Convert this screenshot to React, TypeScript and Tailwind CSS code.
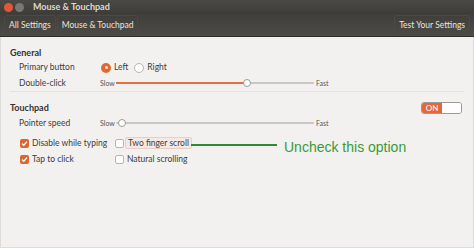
import React from "react";

const font = { fontFamily: 'Lato, "Open Sans", sans-serif' };

function Slider({ value, fill }: { value: number; fill: boolean }) {
  return (
    <div className="flex items-center">
      <span className="text-[7px] text-[#555] mr-[2px] w-[14px]">Slow</span>
      <div className="relative w-[198px] h-[8px] flex items-center">
        <div className="w-full h-[2px] bg-[#c9c7c3] rounded" />
        {fill && (
          <div className="absolute left-0 h-[2px] bg-[#e0723e]" style={{ width: `${value}px` }} />
        )}
        <div
          className="absolute w-[8px] h-[8px] rounded-full bg-white border border-[#9d9a94]"
          style={{ left: `${value - 4}px` }}
        />
      </div>
      <span className="text-[7px] text-[#555] ml-[2px]">Fast</span>
    </div>
  );
}

function Check({ on }: { on: boolean }) {
  return on ? (
    <div className="w-[9px] h-[9px] rounded-[2px] bg-[#d9682f] flex items-center justify-center shrink-0">
      <svg width="7" height="7" viewBox="0 0 7 7">
        <path d="M1 3.6 L2.8 5.3 L6 1.6" stroke="white" strokeWidth="1.3" fill="none" />
      </svg>
    </div>
  ) : (
    <div className="w-[9px] h-[9px] rounded-[2px] bg-white border border-[#b8b5b0] shrink-0" />
  );
}

export default function App() {
  return (
    <div className="w-[474px] h-[248px] flex flex-col text-[#3c3c3c] overflow-hidden whitespace-nowrap" style={font}>
      {/* title bar */}
      <div className="h-[14px] bg-gradient-to-b from-[#4a4944] to-[#3d3c38] flex items-center pl-[4px]">
        <div className="w-[9px] h-[9px] rounded-full bg-[#e2563b]" />
        <div className="w-[9px] h-[9px] rounded-full bg-[#7a7873] ml-[2px]" />
        <span className="ml-[9px] text-[9px] font-bold text-[#dcd9d2]">Mouse &amp; Touchpad</span>
      </div>
      {/* toolbar */}
      <div className="h-[23px] bg-gradient-to-b from-[#3f3e3a] to-[#4d4b46] flex items-center px-[4px] border-b border-[#2e2d2a]">
        <div className="px-[4px] py-[3px] rounded-[3px] border border-[#4b4944] text-[8.5px] text-[#e8e5df]">All Settings</div>
        <div className="ml-[1px] px-[4px] py-[3px] rounded-[3px] border border-[#4b4944] text-[8.5px] text-[#e8e5df]">Mouse &amp; Touchpad</div>
        <div className="ml-auto px-[4px] py-[3px] rounded-[3px] border border-[#4b4944] text-[8.5px] text-[#e8e5df]">Test Your Settings</div>
      </div>
      {/* content */}
      <div className="relative flex-1 bg-[#f2f1f0] border-x border-b border-[#dedcd8] px-[9px] pt-[9px]">
        <div className="h-[14px] flex items-center text-[9px] font-bold text-[#333]">General</div>
        <div className="h-[15px] flex items-center text-[8.5px]">
          <span className="ml-[9px] w-[82px]">Primary button</span>
          <div className="w-[10px] h-[10px] rounded-full bg-[#dd6a34] flex items-center justify-center">
            <div className="w-[3px] h-[3px] rounded-full bg-[#fbe2d5]" />
          </div>
          <span className="ml-[3px]">Left</span>
          <div className="ml-[6px] w-[10px] h-[10px] rounded-full bg-white border border-[#b8b5b0]" />
          <span className="ml-[3px]">Right</span>
        </div>
        <div className="h-[16px] flex items-center text-[8.5px]">
          <span className="ml-[9px] w-[81px]">Double-click</span>
          <Slider value={131} fill={true} />
        </div>
        <div className="h-px bg-[#e4e2df]" />
        <div className="h-[14px] mt-[9px] flex items-center text-[9px] font-bold text-[#333]">
          <span>Touchpad</span>
          <div className="ml-auto mr-[2px] w-[41px] h-[12px] rounded-[3px] border border-[#9d9a94] flex overflow-hidden">
            <div className="w-[20px] bg-[#e2673a] text-white text-[8px] font-normal flex items-center justify-center">ON</div>
            <div className="flex-1 bg-white" />
          </div>
        </div>
        <div className="h-[16px] flex items-center text-[8.5px]">
          <span className="ml-[9px] w-[81px]">Pointer speed</span>
          <Slider value={6} fill={false} />
        </div>
        <div className="h-[16px] mt-[4px] flex items-center text-[8.5px]">
          <div className="ml-[10px]"><Check on={true} /></div>
          <span className="ml-[3px] w-[83px]">Disable while typing</span>
          <Check on={false} />
          <span className="ml-[1px] px-[2px] h-[12px] flex items-center rounded-[2px] bg-[#f6e9e4] border border-[#e8cfc5]">Two finger scroll</span>
        </div>
        <div className="h-[16px] flex items-center text-[8.5px]">
          <div className="ml-[10px]"><Check on={true} /></div>
          <span className="ml-[3px] w-[83px]">Tap to click</span>
          <Check on={false} />
          <span className="ml-[3px]">Natural scrolling</span>
        </div>
        {/* annotation overlay */}
        <div className="absolute left-[190px] top-[107px] w-[86px] h-[2px] bg-[#2f8a35]" />
        <div
          className="absolute left-[283px] top-[100px] text-[14px] text-[#3a9a36]"
          style={{ fontFamily: '"Liberation Sans", Arial, sans-serif' }}
        >
          Uncheck this option
        </div>
      </div>
    </div>
  );
}
